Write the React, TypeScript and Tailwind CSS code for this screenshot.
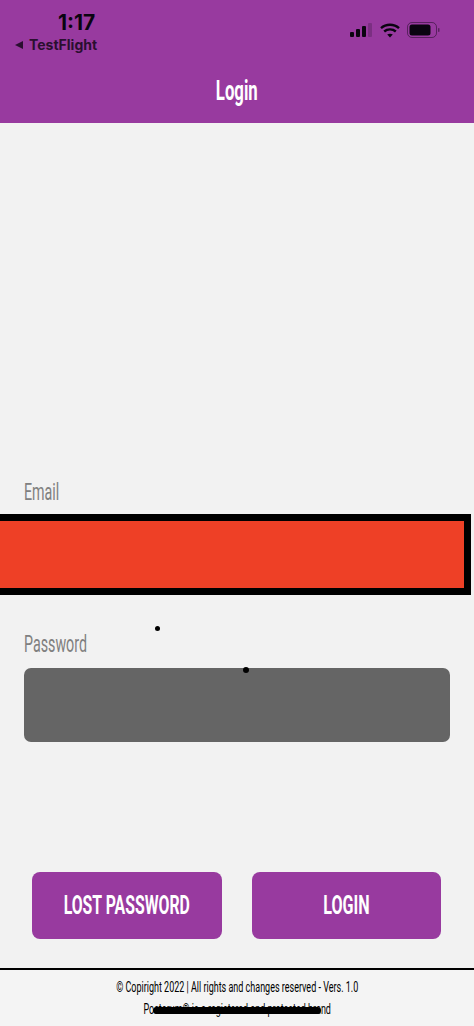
const narrow = { fontFamily: '"Roboto", "Liberation Sans", sans-serif' };

function StatusIcons() {
  return (
    <div className="flex items-center gap-[6px]">
      <svg width="24" height="14" viewBox="0 0 24 14">
        <rect x="0" y="9" width="4" height="5" rx="1" fill="#0a0410" />
        <rect x="6" y="6" width="4" height="8" rx="1" fill="#0a0410" />
        <rect x="12" y="3" width="4" height="11" rx="1" fill="#0a0410" />
        <rect x="18" y="0" width="4" height="14" rx="1" fill="#0a0410" opacity="0.2" />
      </svg>
      <svg width="20" height="15" viewBox="0 0 20 15" fill="none" stroke="#0a0410" strokeWidth="2.4">
        <path d="M1 5.2C6 .6 14 .6 19 5.2" />
        <path d="M4.2 8.5C7.4 5.6 12.6 5.6 15.8 8.5" />
        <path d="M10 14.6 7.2 11.6C8.8 10.3 11.2 10.3 12.8 11.6Z" fill="#0a0410" stroke="none" />
      </svg>
      <svg width="33" height="16" viewBox="0 0 33 16" className="ml-[1px]">
        <rect x="0.5" y="0.5" width="29" height="15" rx="4.5" fill="none" stroke="#0a0410" strokeOpacity="0.45" />
        <rect x="2.5" y="2.5" width="21" height="11" rx="2.5" fill="#0a0410" />
        <rect x="31" y="6" width="1.5" height="4" rx="0.75" fill="#0a0410" opacity="0.45" />
      </svg>
    </div>
  );
}

function Condensed({ children, className }: { children: React.ReactNode; className: string }) {
  return (
    <span className={`inline-block whitespace-nowrap [transform:scaleX(0.62)] ${className}`} style={narrow}>
      {children}
    </span>
  );
}

export default function App() {
  return (
    <div className="relative flex h-[1026px] w-[474px] flex-col overflow-hidden bg-[#f2f2f2]">
      {/* Header */}
      <header className="flex h-[123px] shrink-0 flex-col bg-[#983a9f]">
        <div className="flex h-[58px] items-start justify-between pl-[15px] pr-[34px] pt-[11px]">
          <div className="flex flex-col" style={{ fontFamily: '"Inter", "Liberation Sans", sans-serif' }}>
            <span className="ml-[43px] text-[21px] font-bold leading-[24px] text-[#0a0410]">1:17</span>
            <span className="flex items-center gap-[6px] text-[14px] font-bold leading-[20px] text-[#2a0f30]">
              <span className="h-0 w-0 border-y-[4px] border-r-[8px] border-y-transparent border-r-[#2a0f30]" />
              TestFlight
            </span>
          </div>
          <div className="pt-[11px]">
            <StatusIcons />
          </div>
        </div>
        <div className="flex h-[65px] items-start justify-center pt-[17px]">
          <Condensed className="text-[27px] font-bold leading-[32px] text-white">Login</Condensed>
        </div>
      </header>

      {/* Form */}
      <main className="flex flex-1 flex-col pt-[356px]">
        <label className="h-[35px] pl-[24px]">
          <Condensed className="origin-left text-[23px] leading-[28px] text-[#808080]">Email</Condensed>
        </label>
        <div className="h-[81px] w-[471px] border-[7px] border-l-0 border-black bg-[#ee4026]" />
        <label className="mt-[36px] h-[37px] pl-[24px]">
          <Condensed className="origin-left text-[23px] leading-[28px] text-[#808080]">Password</Condensed>
        </label>
        <div className="mx-[24px] h-[74px] rounded-[7px] bg-[#656565]" />

        <div className="mt-[130px] flex gap-[30px] pl-[32px] pr-[33px]">
          <button className="flex h-[67px] w-[190px] items-center justify-center rounded-[8px] bg-[#983a9f]">
            <Condensed className="text-[25.5px] font-bold text-white">LOST PASSWORD</Condensed>
          </button>
          <button className="flex h-[67px] w-[189px] items-center justify-center rounded-[8px] bg-[#983a9f]">
            <Condensed className="text-[26px] font-bold text-white">LOGIN</Condensed>
          </button>
        </div>
      </main>

      {/* Footer */}
      <footer className="flex h-[58px] shrink-0 flex-col items-center border-t-2 border-black bg-[#f4f4f4] pt-[8px]">
        <Condensed className="text-[14.5px] leading-[20px] text-black">© Copiright 2022 | All rights and changes reserved - Vers. 1.0</Condensed>
        <Condensed className="mt-[2px] text-[14.5px] leading-[20px] text-black">Postarum® is a registered and protected brand</Condensed>
      </footer>

      {/* Markup over the screenshot */}
      <div className="absolute left-[153px] top-[1007px] h-[7px] w-[168px] rounded-full bg-black" />
      <div className="absolute left-[155px] top-[626px] h-[5px] w-[5px] rounded-full bg-black" />
      <div className="absolute left-[243px] top-[667px] h-[6px] w-[6px] rounded-full bg-black" />
    </div>
  );
}
